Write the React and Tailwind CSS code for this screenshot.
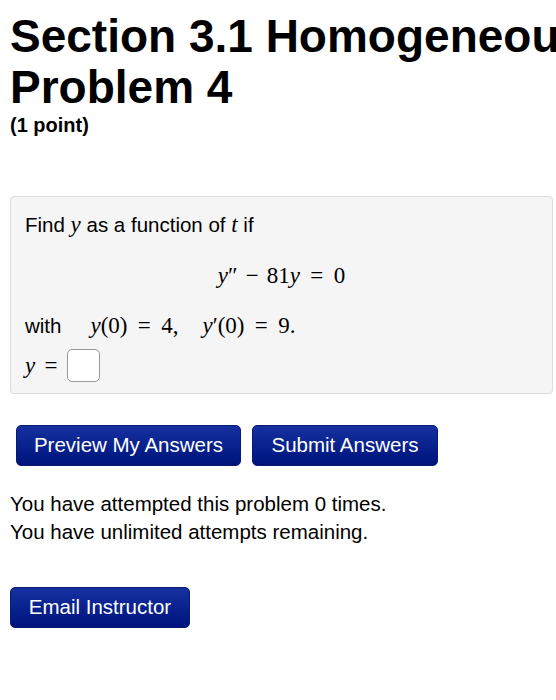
import React from 'react';

const sans = { fontFamily: '"Liberation Sans", Arial, sans-serif' };

function M({ children }) {
  return <span className="font-['Liberation_Serif',serif] text-[23px] leading-none whitespace-nowrap">{children}</span>;
}

function V({ children }) {
  return <span className="italic font-['Liberation_Serif',serif]">{children}</span>;
}

function Eq() {
  return <span className="mx-[0.45em]">=</span>;
}

function Minus() {
  return <span className="mx-[0.35em]">−</span>;
}

function Btn({ children, className = '' }) {
  return (
    <button
      className={`h-[41px] rounded-[5px] bg-gradient-to-b from-[#1630a0] to-[#00127c] border border-[#0a1a70] text-white text-[20.5px] ${className}`}
    >
      {children}
    </button>
  );
}

export default function App() {
  return (
    <div className="w-[556px] h-[700px] overflow-hidden bg-white text-black" style={sans}>
      <div className="pl-[10px] pt-[10px]">
        <h1 className="font-bold text-[46px] leading-[52px] whitespace-nowrap overflow-hidden">
          Section 3.1 Homogeneous
        </h1>
        <h1 className="font-bold text-[46px] leading-[50px]">Problem 4</h1>
        <div className="font-bold text-[20px] leading-[26px]">(1 point)</div>
      </div>

      <div className="ml-[10px] mr-[3px] mt-[58px] bg-[#f5f5f5] border border-[#dcdcdc] rounded-[4px] px-[14px] pt-[15px] pb-[11px] text-[20.5px]">
        <div className="h-[26px] flex items-center">
          <span>
            Find <M><V>y</V></M> as a function of <M><V>t</V></M> if
          </span>
        </div>
        <div className="h-[26px] mt-[24px] flex items-center justify-center">
          <M>
            <V>y</V>″<Minus />81<V>y</V>
            <Eq />0
          </M>
        </div>
        <div className="h-[26px] mt-[25px] flex items-center">
          <span>with</span>
          <span className="ml-[29px]">
            <M>
              <V>y</V>(0)<Eq />4,
              <span className="inline-block w-[24px]"></span>
              <V>y</V>′(0)<Eq />9.
            </M>
          </span>
        </div>
        <div className="h-[34px] mt-[9px] flex items-center">
          <M>
            <V>y</V>
            <span className="ml-[0.4em]">=</span>
          </M>
          <span className="ml-[10px] inline-block w-[33px] h-[33px] bg-white border border-[#999] rounded-[5px]"></span>
        </div>
      </div>

      <div className="flex gap-[11px] ml-[16px] mt-[31px]">
        <Btn className="w-[225px]">Preview My Answers</Btn>
        <Btn className="w-[186px]">Submit Answers</Btn>
      </div>

      <div className="px-[10px] mt-[24px] text-[20.5px] leading-[28px]">
        <p>You have attempted this problem 0 times.</p>
        <p>You have unlimited attempts remaining.</p>
      </div>

      <div className="px-[10px] mt-[41px]">
        <Btn className="w-[180px]">Email Instructor</Btn>
      </div>
    </div>
  );
}
